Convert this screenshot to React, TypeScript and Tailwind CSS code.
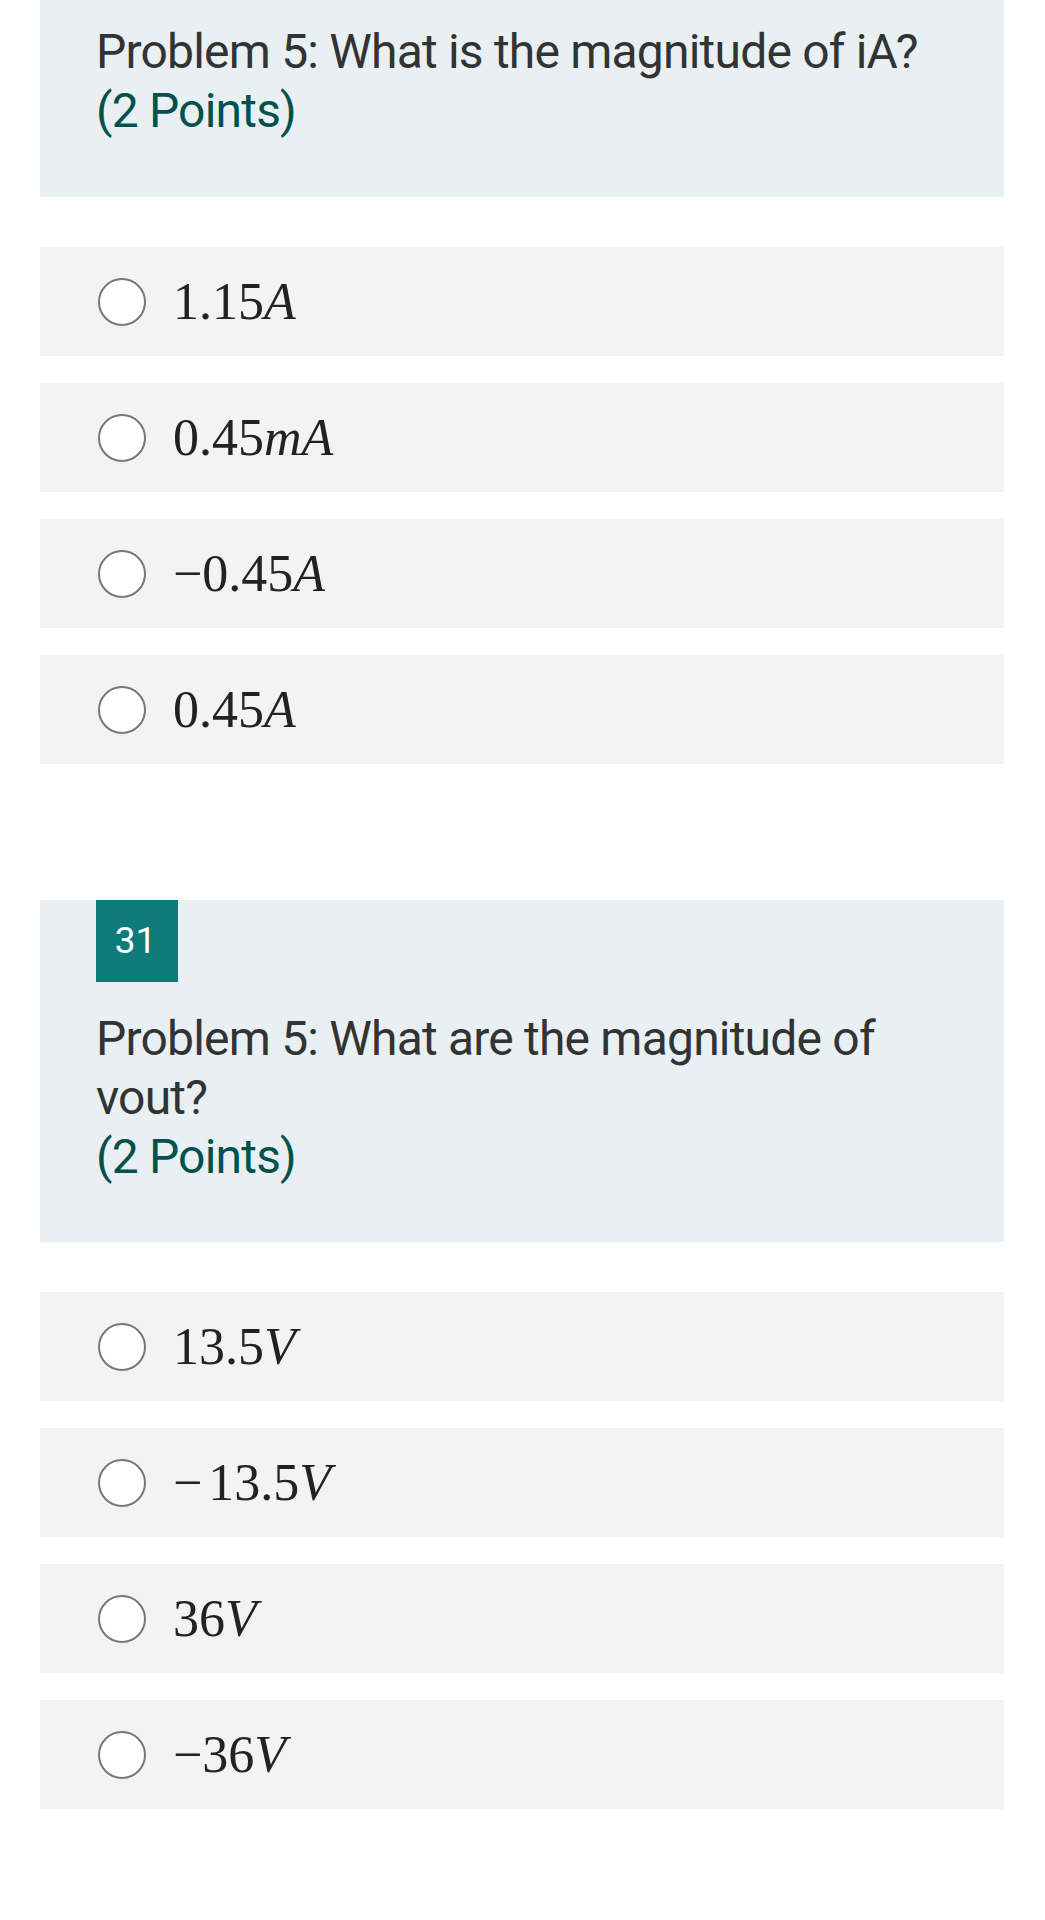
import React from "react";

const titleFont = { fontFamily: "Roboto, 'Noto Sans', Arial, sans-serif" };

function Option({ children }: { children: React.ReactNode }) {
  return (
    <div className="flex h-[109px] items-center bg-[#f3f3f3] pl-[58px]">
      <div className="h-12 w-12 shrink-0 rounded-full border-2 border-[#777777] bg-white" />
      <div
        className="ml-[27px] text-[52px] leading-none text-[#222222]"
        style={{ fontFamily: "'Liberation Serif', 'Times New Roman', serif" }}
      >
        {children}
      </div>
    </div>
  );
}

const I = ({ children }: { children: React.ReactNode }) => <span className="italic">{children}</span>;

export default function App() {
  return (
    <div className="min-h-[1920px] w-[1045px] bg-white">
      <div className="mx-[40px] w-[964px]">
        {/* Question 30 header */}
        <div className="bg-[#e8f0f3] pl-[56px] pr-[40px] pt-[22px] pb-[57px] tracking-[-0.8px]" style={titleFont}>
          <div className="text-[48px] leading-[59px] text-[#333333]">Problem 5: What is the magnitude of iA?</div>
          <div className="text-[48px] leading-[59px] text-[#03514c]">(2 Points)</div>
        </div>

        <div className="mt-[50px] flex flex-col gap-[27px]">
          <Option>
            1.15<I>A</I>
          </Option>
          <Option>
            0.45<I>mA</I>
          </Option>
          <Option>
            −0.45<I>A</I>
          </Option>
          <Option>
            0.45<I>A</I>
          </Option>
        </div>

        {/* Question 31 header */}
        <div className="mt-[136px] bg-[#e8f0f3] pl-[56px] pr-[40px] pb-[56px] tracking-[-0.8px]" style={titleFont}>
          <div className="flex h-[82px] w-[82px] items-center justify-center bg-[#0e7a7a] pr-[3px] text-[37px] tracking-normal text-white">
            31
          </div>
          <div className="mt-[27px] text-[48px] leading-[59px] text-[#333333]">
            Problem 5: What are the magnitude of vout?
          </div>
          <div className="text-[48px] leading-[59px] text-[#03514c]">(2 Points)</div>
        </div>

        <div className="mt-[50px] flex flex-col gap-[27px]">
          <Option>
            13.5<I>V</I>
          </Option>
          <Option>
            <span className="mr-[6px]">−</span>13.5<I>V</I>
          </Option>
          <Option>
            36<I>V</I>
          </Option>
          <Option>
            −36<I>V</I>
          </Option>
        </div>
      </div>
    </div>
  );
}
